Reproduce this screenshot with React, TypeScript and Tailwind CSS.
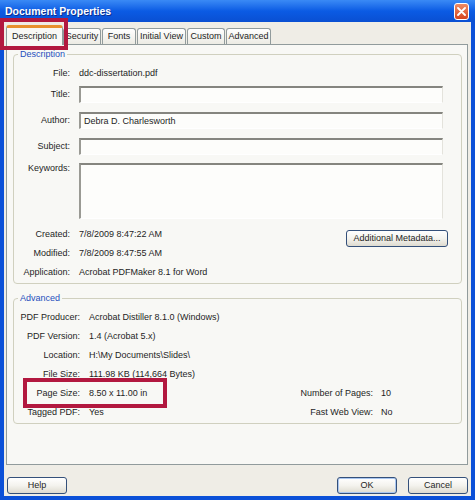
import React from "react";

const btn =
  "h-[17px] rounded-[3px] border border-[#34507a] bg-linear-to-b from-white via-[#f4f3ee] to-[#dedbd0] flex items-center justify-center text-[#1e1e1e]";

function TitleBar() {
  return (
    <div className="h-[22px] shrink-0 flex items-center bg-linear-to-b from-[#3a8af5] via-[#0b5be4] to-[#0a4fd2] pl-[5px] pr-[6px]">
      <span className="text-white font-bold text-[10.5px] [text-shadow:1px_1px_#0a2f8f]">
        Document Properties
      </span>
      <div className="ml-auto w-[15px] h-[17px] rounded-[3px] border border-white bg-linear-to-b from-[#ee8a62] to-[#d5431c] flex items-center justify-center">
        <svg width="9" height="9" viewBox="0 0 9 9">
          <path d="M1 1L8 8M8 1L1 8" stroke="white" strokeWidth="1.8" strokeLinecap="round" />
        </svg>
      </div>
    </div>
  );
}

function Tabs() {
  const tabs = [
    { name: "Security", w: "w-[38px]" },
    { name: "Fonts", w: "w-[34px]" },
    { name: "Initial View", w: "w-[49px]" },
    { name: "Custom", w: "w-[38px]" },
    { name: "Advanced", w: "w-[45px]" },
  ];
  return (
    <div className="h-[19px] flex items-end">
      <div className="relative z-10 -mb-px w-[57px] h-[20px] rounded-t-[3px] border-x border-[#919b9c] border-t-[3px] border-t-[#e8912e] bg-[#f8f8f5] flex items-center justify-center">
        Description
      </div>
      <div className="flex gap-[1px]">
        {tabs.map((t) => (
          <div
            key={t.name}
            className={`${t.w} h-[16px] rounded-t-[3px] border-x border-t border-[#919b9c] bg-linear-to-b from-white to-[#ecebe4] flex items-center justify-center`}
          >
            {t.name}
          </div>
        ))}
      </div>
    </div>
  );
}

function Input({ value, tall }: { value?: string; tall?: boolean }) {
  return (
    <div
      className={`w-[364px] ${tall ? "h-[56px] items-start pt-[3px]" : "h-[17px] items-center"} flex pl-[3px] bg-[#fdfdfb] border-t-2 border-l-2 border-t-[#85857f] border-l-[#9a9a94] border-b border-r border-b-white border-r-[#e4e3dc]`}
    >
      {value}
    </div>
  );
}

function Legend({ children }: { children: React.ReactNode }) {
  return (
    <legend className="ml-[4px] px-[2px] leading-[11px] text-[#1f4fbd]">{children}</legend>
  );
}

function InfoRow({ label, value }: { label: string; value: string }) {
  return (
    <div className="h-[19px] flex items-center gap-[9px]">
      <span className="w-[56px] text-right">{label}</span>
      <span>{value}</span>
    </div>
  );
}

function AdvRow({
  label,
  value,
  rLabel,
  rValue,
}: {
  label: string;
  value: string;
  rLabel?: string;
  rValue?: string;
}) {
  return (
    <div className="h-[19px] flex items-center">
      <span className="w-[66px] text-right">{label}</span>
      <span className="ml-[9px] w-[161px]">{value}</span>
      {rLabel && (
        <>
          <span className="w-[123px] text-right">{rLabel}</span>
          <span className="ml-[8px]">{rValue}</span>
        </>
      )}
    </div>
  );
}

export default function App() {
  return (
    <div className="relative w-[475px] h-[500px] flex flex-col bg-[#0b50d8] font-['Liberation_Sans',Arial,sans-serif] text-[9px] leading-none text-[#1e1e1e]">
      <TitleBar />
      <div className="flex-1 flex flex-col mx-[4px] mb-[4px] bg-[#efede6] pt-[3px] pl-[2px] pr-[3px]">
        <Tabs />
        <div className="h-[421px] border border-[#919b9c] bg-[#f8f8f5] pl-[6px] pr-[5px] pt-[4px]">
          <fieldset className="border border-[#d0d0bf] rounded-[4px] pb-[1px]">
            <Legend>Description</Legend>
            <div className="mt-[6px] h-[14px] flex items-center gap-[9px]">
              <span className="w-[56px] text-right">File:</span>
              <span>ddc-dissertation.pdf</span>
            </div>
            <div className="mt-[6px] flex items-center gap-[9px]">
              <span className="w-[56px] text-right">Title:</span>
              <Input />
            </div>
            <div className="mt-[9px] flex items-center gap-[9px]">
              <span className="w-[56px] text-right">Author:</span>
              <Input value="Debra D. Charlesworth" />
            </div>
            <div className="mt-[9px] flex items-center gap-[9px]">
              <span className="w-[56px] text-right">Subject:</span>
              <Input />
            </div>
            <div className="mt-[8px] flex items-start gap-[9px]">
              <span className="w-[56px] text-right pt-[1px]">Keywords:</span>
              <Input tall />
            </div>
            <div className="mt-[6px] flex items-start">
              <div className="flex flex-col">
                <InfoRow label="Created:" value="7/8/2009 8:47:22 AM" />
                <InfoRow label="Modified:" value="7/8/2009 8:47:55 AM" />
                <InfoRow label="Application:" value="Acrobat PDFMaker 8.1 for Word" />
              </div>
              <div className={`${btn} ml-auto mr-[13px] mt-[5px] w-[102px]`}>
                Additional Metadata...
              </div>
            </div>
          </fieldset>

          <fieldset className="mt-[9px] border border-[#d0d0bf] rounded-[4px] pb-[1px]">
            <Legend>Advanced</Legend>
            <div className="mt-[4px] flex flex-col">
              <AdvRow label="PDF Producer:" value="Acrobat Distiller 8.1.0 (Windows)" />
              <AdvRow label="PDF Version:" value="1.4 (Acrobat 5.x)" />
              <AdvRow label="Location:" value="H:\My Documents\Slides\" />
              <AdvRow label="File Size:" value="111.98 KB (114,664 Bytes)" />
              <AdvRow
                label="Page Size:"
                value="8.50 x 11.00 in"
                rLabel="Number of Pages:"
                rValue="10"
              />
              <AdvRow
                label="Tagged PDF:"
                value="Yes"
                rLabel="Fast Web View:"
                rValue="No"
              />
            </div>
          </fieldset>
        </div>

        <div className="mt-[12px] flex pl-[1px]">
          <div className={`${btn} w-[60px]`}>Help</div>
          <div className="ml-auto flex gap-[11px]">
            <div className={`${btn} w-[60px] shadow-[inset_0_0_0_1px_#a9c6f0]`}>OK</div>
            <div className={`${btn} w-[60px]`}>Cancel</div>
          </div>
        </div>
      </div>

      {/* annotation boxes */}
      <div className="absolute left-0 top-[18px] w-[68px] h-[32px] border-4 border-[#b2183f] z-20" />
      <div className="absolute left-[23px] top-[378px] w-[144px] h-[30px] border-4 border-[#b2183f] z-20" />
    </div>
  );
}
